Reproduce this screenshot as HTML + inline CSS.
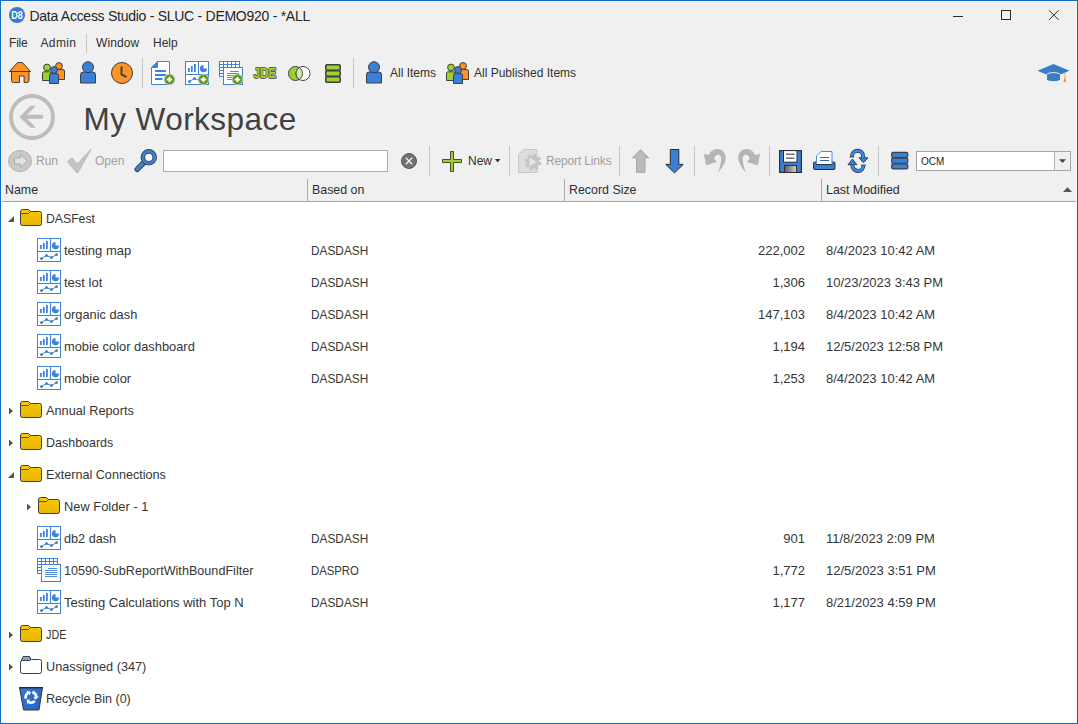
<!DOCTYPE html>
<html><head><meta charset="utf-8"><title>Data Access Studio</title>
<style>
*{box-sizing:border-box;margin:0;padding:0}
html,body{width:1078px;height:724px;overflow:hidden;background:#f0f0f0}
body{position:relative;font-family:"Liberation Sans",sans-serif;color:#1e1e1e}
.a{position:absolute;white-space:nowrap}
#frame{position:absolute;left:0;top:0;width:1078px;height:724px;border:1px solid #0c6dc9;box-shadow:inset 0 0 0 1px #fbf7f1;z-index:50;pointer-events:none}
.ui{font-size:12px;line-height:16px;color:#303030}
.dis{color:#a0a0a0}
.sep{position:absolute;width:1px;background:#c6c6c6}
#tree{position:absolute;left:1px;top:202px;width:1076px;height:521px;background:#fff}
.t{position:absolute;white-space:nowrap;font-size:13px;line-height:32px;height:32px;color:#363636;padding-top:1px}
.r{text-align:right}
.hdr{position:absolute;white-space:nowrap;top:181px;height:18px;line-height:18px;font-size:12.4px;color:#2e2e2e}
svg{position:absolute;overflow:visible}
</style></head><body>
<svg style="left:9px;top:7px" width="16" height="16" viewBox="0 0 16 16" ><circle cx="8" cy="8" r="8" fill="#3579d1"/><text x="8" y="11.6" font-family="Liberation Sans,sans-serif" font-size="10" font-weight="bold" fill="#fff" text-anchor="middle" textLength="11.6" lengthAdjust="spacingAndGlyphs">D8</text></svg>
<div class="a" id="title" style="left:29.5px;top:7px;font-size:14px;line-height:18px;color:#262626;letter-spacing:-0.27px">Data Access Studio - SLUC - DEMO920 - *ALL</div>
<svg style="left:953px;top:10px" width="106" height="11" viewBox="0 0 106 11" fill="none" stroke="#2b2b2b" stroke-width="1"><path d="M0 6.5H10"/><rect x="48.5" y="0.5" width="9" height="9"/><path d="M96 0.3l9.6 9.6M105.6 0.3l-9.6 9.6"/></svg>
<div class="a ui" style="left:9px;top:35px;letter-spacing:-0.2px">File</div>
<div class="a ui" style="left:40.5px;top:35px;letter-spacing:0.35px">Admin</div>
<div class="a ui" style="left:96px;top:35px;letter-spacing:0.1px">Window</div>
<div class="a ui" style="left:153px;top:35px;letter-spacing:0px">Help</div>
<div class="sep" style="left:86px;top:34px;height:19px"></div>
<svg style="left:9px;top:62px" width="22" height="22" viewBox="0 0 22 22" ><path d="M2.5 9.5V18.5a2 2 0 0 0 2 2H10.5V14h4.6V20.5H18a2 2 0 0 0 2-2V9.5Z" fill="#ff9326" stroke="#3f3f3f" stroke-width="1"/><path d="M8.5 0.6h5L21.6 9.5H0.4Z" fill="#ff9326" stroke="#3f3f3f" stroke-width="1" stroke-linejoin="round"/></svg>
<svg style="left:42px;top:62px" width="24" height="23" viewBox="0 0 24 23" ><path d="M0.5 18.5V11.3a1.5 1.5 0 0 1 1.5 -1.5H7.5a1.5 1.5 0 0 1 1.5 1.5V18.5Z" fill="#9bd230" stroke="#3f3f3f"/><circle cx="5" cy="5.5" r="3.4" fill="#9bd230" stroke="#3f3f3f"/><path d="M13.5 17.5V9.1a1.5 1.5 0 0 1 1.5 -1.5H21.0a1.5 1.5 0 0 1 1.5 1.5V17.5Z" fill="#ff9326" stroke="#3f3f3f"/><circle cx="17" cy="4" r="3.4" fill="#ff9326" stroke="#3f3f3f"/><path d="M7.5 21.5V13.2a1.5 1.5 0 0 1 1.5 -1.5H15.0a1.5 1.5 0 0 1 1.5 1.5V21.5Z" fill="#3a80d9" stroke="#3f3f3f"/><circle cx="12" cy="8" r="3.4" fill="#3a80d9" stroke="#3f3f3f"/></svg>
<svg style="left:80px;top:60px" width="16" height="24" viewBox="0 0 16 24" ><path d="M0.5 23V14.5a2.5 2.5 0 0 1 2.5 -2.5H13.0a2.5 2.5 0 0 1 2.5 2.5V23Z" fill="#3a80d9" stroke="#3f3f3f"/><circle cx="8" cy="7.2" r="5.5" fill="#3a80d9" stroke="#3f3f3f"/></svg>
<svg style="left:111px;top:62px" width="22" height="22" viewBox="0 0 22 22" ><circle cx="11" cy="11" r="10.5" fill="#ff9326" stroke="#3f3f3f"/><path d="M10.5 4.5V12.5L15.5 15" fill="none" stroke="#3f3f3f" stroke-width="2"/></svg>
<div class="sep" style="left:142px;top:58px;height:30px"></div>
<svg style="left:151px;top:61px" width="24" height="24" viewBox="0 0 24 24" ><path d="M6.5 0.5H18.5V23.5H0.5V6.5Z" fill="#fff" stroke="#3f82d8"/><path d="M0.5 6.5H6.5V0.5Z" fill="#3f82d8" stroke="#3f82d8"/><path d="M4 10H15M4 14H15M4 18H11.5" stroke="#3f82d8" stroke-width="2" fill="none"/><circle cx="18.5" cy="18.5" r="5.7" fill="#b1c98c"/><circle cx="18.5" cy="18.5" r="4.2" fill="#5c8c20" stroke="#4a7416" stroke-width="0.5"/><path d="M15.7 18.5H21.3M18.5 15.7V21.3" stroke="#fff" stroke-width="1.9" fill="none"/></svg>
<svg style="left:185px;top:61px" width="24" height="24" viewBox="0 0 24 24" ><rect x="0.5" y="0.5" width="23" height="23" fill="#fff" stroke="#3f82d8"/><path d="M0.5 13.5H23.5M13.5 0.5V13.5" stroke="#3f82d8" stroke-width="1" fill="none"/><path d="M3.8 11V7M6.8 11V5M9.9 11V3" stroke="#3f82d8" stroke-width="1.8" fill="none"/><path d="M18.5 7.6V4A3.6 3.6 0 1 0 22.1 7.6Z" fill="#3f82d8"/><path d="M4.5 20.5L9.5 17.5L14.5 19.5L19.5 16.5" stroke="#3f82d8" stroke-width="1" fill="none"/><circle cx="4.5" cy="20.5" r="1.5" fill="#3f82d8"/><circle cx="9.5" cy="17.5" r="1.5" fill="#3f82d8"/><circle cx="14.5" cy="19.5" r="1.5" fill="#3f82d8"/><circle cx="19.5" cy="16.5" r="1.5" fill="#3f82d8"/><circle cx="18.5" cy="18.5" r="5.7" fill="#b1c98c"/><circle cx="18.5" cy="18.5" r="4.2" fill="#5c8c20" stroke="#4a7416" stroke-width="0.5"/><path d="M15.7 18.5H21.3M18.5 15.7V21.3" stroke="#fff" stroke-width="1.9" fill="none"/></svg>
<svg style="left:219px;top:61px" width="24" height="24" viewBox="0 0 24 24" ><rect x="0.5" y="0.5" width="20" height="15" fill="#fff" stroke="#3f82d8"/><path d="M0.5 3.5H20.5M0.5 6.5H20.5M0.5 9.5H20.5M0.5 12.5H20.5M4.5 0.5V15.5M8.5 0.5V15.5M12.5 0.5V15.5M16.5 0.5V15.5" stroke="#3f82d8" fill="none"/><rect x="4.5" y="6.5" width="19" height="17" fill="#fff" stroke="#3f82d8"/><path d="M11 10.5H20M8 12.5H20M8 14.5H20M8 16.5H20M8 18.5H20" stroke="#3f82d8" stroke-width="0.9" fill="none"/><circle cx="18.5" cy="18.5" r="5.7" fill="#b1c98c"/><circle cx="18.5" cy="18.5" r="4.2" fill="#5c8c20" stroke="#4a7416" stroke-width="0.5"/><path d="M15.7 18.5H21.3M18.5 15.7V21.3" stroke="#fff" stroke-width="1.9" fill="none"/></svg>
<svg style="left:253px;top:67px" width="24" height="12" viewBox="0 0 24 12" ><text x="0.5" y="11" font-family="Liberation Sans,sans-serif" font-weight="bold" font-size="14" fill="#9bd230" stroke="#3f3f3f" stroke-width="1.5" paint-order="stroke" stroke-linejoin="round" textLength="23" lengthAdjust="spacingAndGlyphs">JDE</text></svg>
<svg style="left:288px;top:66px" width="23" height="15" viewBox="0 0 23 15" ><circle cx="7.5" cy="7.5" r="7" fill="#9bd230" stroke="#3f3f3f"/><circle cx="15" cy="7.5" r="7" fill="#fff" stroke="#3f3f3f"/><path d="M11.25 1.6A7 7 0 0 1 11.25 13.4A7 7 0 0 1 11.25 1.6Z" fill="#d4eaa6" stroke="#3f3f3f" stroke-width="1"/></svg>
<svg style="left:325px;top:64px" width="16" height="19" viewBox="0 0 16 19" ><rect x="0.75" y="0.75" width="14.5" height="5.5" rx="1.2" fill="#9bd230" stroke="#3f3f3f" stroke-width="1.5"/><rect x="0.75" y="6.75" width="14.5" height="5.5" rx="1.2" fill="#9bd230" stroke="#3f3f3f" stroke-width="1.5"/><rect x="0.75" y="12.75" width="14.5" height="5.5" rx="1.2" fill="#9bd230" stroke="#3f3f3f" stroke-width="1.5"/></svg>
<div class="sep" style="left:353px;top:58px;height:30px"></div>
<svg style="left:366px;top:60px" width="16" height="24" viewBox="0 0 16 24" ><path d="M0.5 23V14.5a2.5 2.5 0 0 1 2.5 -2.5H13.0a2.5 2.5 0 0 1 2.5 2.5V23Z" fill="#3a80d9" stroke="#3f3f3f"/><circle cx="8" cy="7.2" r="5.5" fill="#3a80d9" stroke="#3f3f3f"/></svg>
<div class="a ui" style="left:390px;top:65px">All Items</div>
<svg style="left:446px;top:62px" width="24" height="23" viewBox="0 0 24 23" ><path d="M0.5 18.5V11.3a1.5 1.5 0 0 1 1.5 -1.5H7.5a1.5 1.5 0 0 1 1.5 1.5V18.5Z" fill="#9bd230" stroke="#3f3f3f"/><circle cx="5" cy="5.5" r="3.4" fill="#9bd230" stroke="#3f3f3f"/><path d="M13.5 17.5V9.1a1.5 1.5 0 0 1 1.5 -1.5H21.0a1.5 1.5 0 0 1 1.5 1.5V17.5Z" fill="#ff9326" stroke="#3f3f3f"/><circle cx="17" cy="4" r="3.4" fill="#ff9326" stroke="#3f3f3f"/><path d="M7.5 21.5V13.2a1.5 1.5 0 0 1 1.5 -1.5H15.0a1.5 1.5 0 0 1 1.5 1.5V21.5Z" fill="#3a80d9" stroke="#3f3f3f"/><circle cx="12" cy="8" r="3.4" fill="#3a80d9" stroke="#3f3f3f"/></svg>
<div class="a ui" style="left:474px;top:65px">All Published Items</div>
<svg style="left:1038px;top:64px" width="31" height="18" viewBox="0 0 31 18" ><path d="M15.5 0L31.5 6.7L15.5 13.4L-0.5 6.7Z" fill="#3b7cc4"/><path d="M8.5 10.5V15.8C10.5 18.3 20.5 18.3 22.5 15.8V10.5C20.5 8 10.5 8 8.5 10.5Z" fill="#3b7cc4" stroke="#f0f0f0" stroke-width="1"/><path d="M26.6 9V13L25.5 18H28.2L27.4 13V9Z" fill="#f39a2b"/></svg>
<svg style="left:9px;top:94px" width="46" height="46" viewBox="0 0 46 46" ><circle cx="23" cy="23" r="21" fill="none" stroke="#bcbcbc" stroke-width="3.8"/><path d="M10.5 22.8L21.5 11.8H27L18 20.8H34V24.8H18L27 33.8H21.5Z" fill="#bcbcbc"/></svg>
<div class="a" id="h1" style="left:83.5px;top:101px;font-size:31.5px;line-height:36px;color:#414141;letter-spacing:0.45px">My Workspace</div>
<svg style="left:8px;top:150px" width="24" height="22" viewBox="0 0 24 22" ><ellipse cx="12" cy="11" rx="11.5" ry="10.6" fill="#c9c9c9" stroke="#b3b3b3"/><path d="M6.5 8H12.5V4.5L19.5 11L12.5 17.5V14H6.5Z" fill="#e2e2e2" stroke="#a8a8a8" stroke-linejoin="miter"/></svg>
<div class="a ui dis" style="left:36px;top:153px">Run</div>
<svg style="left:67px;top:149px" width="25" height="24" viewBox="0 0 25 24" ><path d="M0.5 12.5L5 8.8L10 15L24.3 0L11 23.5H9.5Z" fill="#c4c4c4" stroke="#b2b2b2" stroke-width="0.8" stroke-linejoin="round"/></svg>
<div class="a ui dis" style="left:95px;top:153px">Open</div>
<svg style="left:134px;top:149px" width="24" height="24" viewBox="0 0 24 24" ><path d="M10.5 13L3.2 20.3" stroke="#3f3f3f" stroke-width="5.4" stroke-linecap="round"/><path d="M10.5 13L3.2 20.3" stroke="#3a80d9" stroke-width="3.4" stroke-linecap="round"/><circle cx="14.8" cy="8.3" r="5.9" fill="#fff" stroke="#3f3f3f" stroke-width="4.6"/><circle cx="14.8" cy="8.3" r="5.9" fill="none" stroke="#3a80d9" stroke-width="2.9"/></svg>
<div class="a" style="left:163px;top:150px;width:225px;height:22px;background:#fff;border:1px solid #ababab"></div>
<svg style="left:401px;top:153px" width="16" height="16" viewBox="0 0 16 16" ><circle cx="8" cy="8" r="7.5" fill="#727272" stroke="#585858"/><path d="M4.8 4.8L11.2 11.2M11.2 4.8L4.8 11.2" stroke="#f4f4f4" stroke-width="1.25"/></svg>
<div class="sep" style="left:429px;top:146px;height:30px"></div>
<svg style="left:442px;top:151px" width="20" height="21" viewBox="0 0 20 21" ><path d="M8.5 0.5H11.5V8.5H19.5V11.5H11.5V20.5H8.5V11.5H0.5V8.5H8.5Z" fill="#9bd230" stroke="#4a4a3a" stroke-width="1"/></svg>
<div class="a ui" style="left:468px;top:153px">New</div>
<svg style="left:495px;top:159px" width="5.4" height="3.5" viewBox="0 0 5.4 3.5" ><path d="M0 0H5.4L2.7 3.5Z" fill="#333"/></svg>
<div class="sep" style="left:509px;top:146px;height:30px"></div>
<svg style="left:518px;top:149px" width="24" height="24" viewBox="0 0 24 24" ><path d="M5.5 0.5H19V23.5H0.5V5.5Z" fill="#dddddd" stroke="#c6c6c6"/><circle cx="15" cy="13" r="6.6" fill="none" stroke="#c4c4c4" stroke-width="3.6" stroke-dasharray="2.9 2.28"/><circle cx="15" cy="13" r="6.4" fill="#c4c4c4"/><path d="M11.5 8.5L18.8 13L11.5 17.5Z" fill="#e4e4e4"/></svg>
<div class="a ui dis" style="left:546px;top:153px;letter-spacing:-0.15px">Report Links</div>
<div class="sep" style="left:619px;top:146px;height:30px"></div>
<svg style="left:632px;top:149px" width="18" height="24" viewBox="0 0 18 24" ><path d="M8.7 0.6L16.9 8.8H13V23.4H4.5V8.8H0.5Z" fill="#bababa" stroke="#a8a8a8" stroke-linejoin="round"/></svg>
<svg style="left:665px;top:149px" width="19" height="24" viewBox="0 0 19 24" ><g transform="translate(0.3,0)"><path d="M9.2 23.9L17.9 15.4H13.5V0.5H5V15.4H0.5Z" fill="#3a80d9" stroke="#2e2e2e" stroke-linejoin="miter"/></g></svg>
<div class="sep" style="left:694px;top:146px;height:30px"></div>
<svg style="left:703px;top:148px" width="24" height="25" viewBox="0 0 24 25" ><path d="M0.9 6L3 17.2L14 14L11 10.6C12 7.5 14.5 6 16.5 7C19 8.5 19 13 15 24.7C20 19 23 13 22.7 9C22.3 4 18.5 1 14.4 1C10.5 1 7.5 3.5 5.7 7Z" fill="#b5b5b5"/></svg>
<svg style="left:737px;top:148px" width="24" height="25" viewBox="0 0 24 25" ><g transform="translate(23.9,0) scale(-1,1)"><path d="M0.9 6L3 17.2L14 14L11 10.6C12 7.5 14.5 6 16.5 7C19 8.5 19 13 15 24.7C20 19 23 13 22.7 9C22.3 4 18.5 1 14.4 1C10.5 1 7.5 3.5 5.7 7Z" fill="#b5b5b5"/></g></svg>
<div class="sep" style="left:769px;top:146px;height:30px"></div>
<svg style="left:779px;top:150px" width="23" height="23" viewBox="0 0 23 23" ><rect x="0.6" y="0.6" width="21.8" height="21.8" fill="#3a80d9" stroke="#2e2e2e" stroke-width="1.2"/><rect x="4.5" y="0.6" width="13.5" height="11.6" fill="#fff" stroke="#2e2e2e" stroke-width="1"/><path d="M7 4.2H15.5M7 8.2H15.5" stroke="#6e6e6e" stroke-width="1.6"/><defs><linearGradient id="sv779" x1="0" y1="0" x2="1" y2="0"><stop offset="0" stop-color="#5e5e5e"/><stop offset="1" stop-color="#d0d0d0"/></linearGradient></defs><rect x="5.5" y="15.5" width="12" height="7" fill="url(#sv779)" stroke="#2e2e2e" stroke-width="1"/></svg>
<svg style="left:813px;top:151px" width="23" height="19" viewBox="0 0 23 19" ><path d="M0.6 12.5a1.5 1.5 0 0 1 1.5-1.5H20.4a1.5 1.5 0 0 1 1.5 1.5V17a1.5 1.5 0 0 1-1.5 1.5H2.1a1.5 1.5 0 0 1-1.5-1.5Z" fill="#3a80d9" stroke="#2e2e2e" stroke-width="1.1"/><path d="M8 0.5H19V13.5H3.5V5Z" fill="#fff" stroke="#4d8be0" stroke-width="1"/><path d="M2.6 13.6H19.9" stroke="#2e2e2e" stroke-width="1"/><path d="M7 6.5H16M7 9.5H16" stroke="#2f62c0" stroke-width="1"/></svg>
<svg style="left:848px;top:148px" width="20" height="26" viewBox="0 0 20 26" ><g transform="translate(0,0.5)"><g fill="none" stroke="#2a3240" stroke-width="4"><path d="M3.9 8.2V7.9A5.7 5.7 0 0 1 15.3 7.9V9.5"/><path d="M4.4 16V16.9A5.5 5.5 0 0 0 15.4 16.9V16.8"/></g><path d="M11 9.3H19.9L15.5 14.3Z" fill="#3a80d9" stroke="#2a3240" stroke-width="0.9" stroke-linejoin="round"/><path d="M0 16.2H8.9L4.4 10.5Z" fill="#3a80d9" stroke="#2a3240" stroke-width="0.9" stroke-linejoin="round"/><g fill="none" stroke="#3a86ea" stroke-width="2.6"><path d="M3.9 8.2V7.9A5.7 5.7 0 0 1 15.3 7.9V9.5"/><path d="M4.4 16V16.9A5.5 5.5 0 0 0 15.4 16.9V16.8"/></g><path d="M1.6 8.6H6.2M13.1 16.5H17.7" stroke="#2a3240" stroke-width="0.8"/></g></svg>
<div class="sep" style="left:878px;top:146px;height:30px"></div>
<svg style="left:891px;top:151px" width="18" height="20" viewBox="0 0 18 20" ><g transform="translate(0,0.7)"><rect x="0.75" y="0.75" width="16.0" height="5.1" rx="1.2" fill="#3a80d9" stroke="#3f3f3f" stroke-width="1.2"/><rect x="0.75" y="6.45" width="16.0" height="5.1" rx="1.2" fill="#3a80d9" stroke="#3f3f3f" stroke-width="1.2"/><rect x="0.75" y="12.15" width="16.0" height="5.1" rx="1.2" fill="#3a80d9" stroke="#3f3f3f" stroke-width="1.2"/></g></svg>
<div class="a" style="left:916px;top:151px;width:155px;height:20px;background:#fff;border:1px solid #a6a6a6;font-size:10px;line-height:19px;padding-left:4px;color:#222">OCM</div>
<div class="a" style="left:1054px;top:152px;width:16px;height:18px;background:#f0f0f0;border-left:1px solid #b4b4b4"></div>
<svg style="left:1059px;top:159px" width="7" height="4" viewBox="0 0 7 4" ><g transform="translate(0,0.3)"><path d="M0 0H7L3.5 3.6Z" fill="#444"/></g></svg>
<div class="hdr" style="left:5px">Name</div>
<div class="hdr" style="left:312px">Based on</div>
<div class="hdr" style="left:569px">Record Size</div>
<div class="hdr" style="left:826px">Last Modified</div>
<div class="sep" style="left:307px;top:179px;height:22px;background:#aaaaaa"></div>
<div class="sep" style="left:564px;top:179px;height:22px;background:#aaaaaa"></div>
<div class="sep" style="left:821px;top:179px;height:22px;background:#aaaaaa"></div>
<svg style="left:1063px;top:187px" width="9" height="6" viewBox="0 0 9 6" ><g transform="translate(0,0.3)"><path d="M4.5 0L9 4.8H0Z" fill="#555"/></g></svg>
<div class="a" style="left:1px;top:201px;width:1076px;height:1px;background:#a6a6a6"></div>
<div id="tree"></div>
<svg style="left:20px;top:209px" width="22" height="17" viewBox="0 0 22 17" ><defs><linearGradient id="fg20_209" x1="0" y1="0" x2="0" y2="1"><stop offset="0" stop-color="#f8c90a"/><stop offset="1" stop-color="#e8b600"/></linearGradient></defs><path d="M2.5 0.5H8.5L10.5 2.5H19.5A2 2 0 0 1 21.5 4.5V14.5A2 2 0 0 1 19.5 16.5H2.5A2 2 0 0 1 0.5 14.5V3Q0.5 0.5 2.5 0.5Z" fill="url(#fg20_209)" stroke="#3f3f3f" stroke-linejoin="round"/><path d="M0.8 4.6H8.4L10.4 2.7" fill="none" stroke="#5a4a14" stroke-width="1"/></svg>
<svg style="left:8px;top:216px" width="6" height="6" viewBox="0 0 6 6" ><path d="M6 0V6H0Z" fill="#555"/></svg>
<div class="t" style="left:46px;top:202px;transform:scaleX(0.94);transform-origin:0 50%">DASFest</div>
<svg style="left:37px;top:238px" width="24" height="24" viewBox="0 0 24 24" ><rect x="0.5" y="0.5" width="23" height="23" fill="#fff" stroke="#3f82d8"/><path d="M0.5 13.5H23.5M13.5 0.5V13.5" stroke="#3f82d8" stroke-width="1" fill="none"/><path d="M3.8 11V7M6.8 11V5M9.9 11V3" stroke="#3f82d8" stroke-width="1.8" fill="none"/><path d="M18.5 7.6V4A3.6 3.6 0 1 0 22.1 7.6Z" fill="#3f82d8"/><path d="M4.5 20.5L9.5 17.5L14.5 19.5L19.5 16.5" stroke="#3f82d8" stroke-width="1" fill="none"/><circle cx="4.5" cy="20.5" r="1.5" fill="#3f82d8"/><circle cx="9.5" cy="17.5" r="1.5" fill="#3f82d8"/><circle cx="14.5" cy="19.5" r="1.5" fill="#3f82d8"/><circle cx="19.5" cy="16.5" r="1.5" fill="#3f82d8"/></svg>
<div class="t" style="left:64px;top:234px">testing map</div>
<div class="t" style="left:310.6px;top:234px;transform:scaleX(0.911);transform-origin:0 50%">DASDASH</div><div class="t r" style="left:705px;width:100px;top:234px">222,002</div><div class="t" style="left:826px;top:234px">8/4/2023 10:42 AM</div>
<svg style="left:37px;top:270px" width="24" height="24" viewBox="0 0 24 24" ><rect x="0.5" y="0.5" width="23" height="23" fill="#fff" stroke="#3f82d8"/><path d="M0.5 13.5H23.5M13.5 0.5V13.5" stroke="#3f82d8" stroke-width="1" fill="none"/><path d="M3.8 11V7M6.8 11V5M9.9 11V3" stroke="#3f82d8" stroke-width="1.8" fill="none"/><path d="M18.5 7.6V4A3.6 3.6 0 1 0 22.1 7.6Z" fill="#3f82d8"/><path d="M4.5 20.5L9.5 17.5L14.5 19.5L19.5 16.5" stroke="#3f82d8" stroke-width="1" fill="none"/><circle cx="4.5" cy="20.5" r="1.5" fill="#3f82d8"/><circle cx="9.5" cy="17.5" r="1.5" fill="#3f82d8"/><circle cx="14.5" cy="19.5" r="1.5" fill="#3f82d8"/><circle cx="19.5" cy="16.5" r="1.5" fill="#3f82d8"/></svg>
<div class="t" style="left:64px;top:266px">test lot</div>
<div class="t" style="left:310.6px;top:266px;transform:scaleX(0.911);transform-origin:0 50%">DASDASH</div><div class="t r" style="left:705px;width:100px;top:266px">1,306</div><div class="t" style="left:826px;top:266px">10/23/2023 3:43 PM</div>
<svg style="left:37px;top:302px" width="24" height="24" viewBox="0 0 24 24" ><rect x="0.5" y="0.5" width="23" height="23" fill="#fff" stroke="#3f82d8"/><path d="M0.5 13.5H23.5M13.5 0.5V13.5" stroke="#3f82d8" stroke-width="1" fill="none"/><path d="M3.8 11V7M6.8 11V5M9.9 11V3" stroke="#3f82d8" stroke-width="1.8" fill="none"/><path d="M18.5 7.6V4A3.6 3.6 0 1 0 22.1 7.6Z" fill="#3f82d8"/><path d="M4.5 20.5L9.5 17.5L14.5 19.5L19.5 16.5" stroke="#3f82d8" stroke-width="1" fill="none"/><circle cx="4.5" cy="20.5" r="1.5" fill="#3f82d8"/><circle cx="9.5" cy="17.5" r="1.5" fill="#3f82d8"/><circle cx="14.5" cy="19.5" r="1.5" fill="#3f82d8"/><circle cx="19.5" cy="16.5" r="1.5" fill="#3f82d8"/></svg>
<div class="t" style="left:64px;top:298px;transform:scaleX(0.984);transform-origin:0 50%">organic dash</div>
<div class="t" style="left:310.6px;top:298px;transform:scaleX(0.911);transform-origin:0 50%">DASDASH</div><div class="t r" style="left:705px;width:100px;top:298px">147,103</div><div class="t" style="left:826px;top:298px">8/4/2023 10:42 AM</div>
<svg style="left:37px;top:334px" width="24" height="24" viewBox="0 0 24 24" ><rect x="0.5" y="0.5" width="23" height="23" fill="#fff" stroke="#3f82d8"/><path d="M0.5 13.5H23.5M13.5 0.5V13.5" stroke="#3f82d8" stroke-width="1" fill="none"/><path d="M3.8 11V7M6.8 11V5M9.9 11V3" stroke="#3f82d8" stroke-width="1.8" fill="none"/><path d="M18.5 7.6V4A3.6 3.6 0 1 0 22.1 7.6Z" fill="#3f82d8"/><path d="M4.5 20.5L9.5 17.5L14.5 19.5L19.5 16.5" stroke="#3f82d8" stroke-width="1" fill="none"/><circle cx="4.5" cy="20.5" r="1.5" fill="#3f82d8"/><circle cx="9.5" cy="17.5" r="1.5" fill="#3f82d8"/><circle cx="14.5" cy="19.5" r="1.5" fill="#3f82d8"/><circle cx="19.5" cy="16.5" r="1.5" fill="#3f82d8"/></svg>
<div class="t" style="left:64px;top:330px;transform:scaleX(0.989);transform-origin:0 50%">mobie color dashboard</div>
<div class="t" style="left:310.6px;top:330px;transform:scaleX(0.911);transform-origin:0 50%">DASDASH</div><div class="t r" style="left:705px;width:100px;top:330px">1,194</div><div class="t" style="left:826px;top:330px">12/5/2023 12:58 PM</div>
<svg style="left:37px;top:366px" width="24" height="24" viewBox="0 0 24 24" ><rect x="0.5" y="0.5" width="23" height="23" fill="#fff" stroke="#3f82d8"/><path d="M0.5 13.5H23.5M13.5 0.5V13.5" stroke="#3f82d8" stroke-width="1" fill="none"/><path d="M3.8 11V7M6.8 11V5M9.9 11V3" stroke="#3f82d8" stroke-width="1.8" fill="none"/><path d="M18.5 7.6V4A3.6 3.6 0 1 0 22.1 7.6Z" fill="#3f82d8"/><path d="M4.5 20.5L9.5 17.5L14.5 19.5L19.5 16.5" stroke="#3f82d8" stroke-width="1" fill="none"/><circle cx="4.5" cy="20.5" r="1.5" fill="#3f82d8"/><circle cx="9.5" cy="17.5" r="1.5" fill="#3f82d8"/><circle cx="14.5" cy="19.5" r="1.5" fill="#3f82d8"/><circle cx="19.5" cy="16.5" r="1.5" fill="#3f82d8"/></svg>
<div class="t" style="left:64px;top:362px">mobie color</div>
<div class="t" style="left:310.6px;top:362px;transform:scaleX(0.911);transform-origin:0 50%">DASDASH</div><div class="t r" style="left:705px;width:100px;top:362px">1,253</div><div class="t" style="left:826px;top:362px">8/4/2023 10:42 AM</div>
<svg style="left:20px;top:401px" width="22" height="17" viewBox="0 0 22 17" ><defs><linearGradient id="fg20_401" x1="0" y1="0" x2="0" y2="1"><stop offset="0" stop-color="#f8c90a"/><stop offset="1" stop-color="#e8b600"/></linearGradient></defs><path d="M2.5 0.5H8.5L10.5 2.5H19.5A2 2 0 0 1 21.5 4.5V14.5A2 2 0 0 1 19.5 16.5H2.5A2 2 0 0 1 0.5 14.5V3Q0.5 0.5 2.5 0.5Z" fill="url(#fg20_401)" stroke="#3f3f3f" stroke-linejoin="round"/><path d="M0.8 4.6H8.4L10.4 2.7" fill="none" stroke="#5a4a14" stroke-width="1"/></svg>
<svg style="left:9px;top:407px" width="5" height="8" viewBox="0 0 5 8" ><path d="M0 0.5L4 4L0 7.5Z" fill="#555"/></svg>
<div class="t" style="left:46px;top:394px;transform:scaleX(0.98);transform-origin:0 50%">Annual Reports</div>
<svg style="left:20px;top:433px" width="22" height="17" viewBox="0 0 22 17" ><defs><linearGradient id="fg20_433" x1="0" y1="0" x2="0" y2="1"><stop offset="0" stop-color="#f8c90a"/><stop offset="1" stop-color="#e8b600"/></linearGradient></defs><path d="M2.5 0.5H8.5L10.5 2.5H19.5A2 2 0 0 1 21.5 4.5V14.5A2 2 0 0 1 19.5 16.5H2.5A2 2 0 0 1 0.5 14.5V3Q0.5 0.5 2.5 0.5Z" fill="url(#fg20_433)" stroke="#3f3f3f" stroke-linejoin="round"/><path d="M0.8 4.6H8.4L10.4 2.7" fill="none" stroke="#5a4a14" stroke-width="1"/></svg>
<svg style="left:9px;top:439px" width="5" height="8" viewBox="0 0 5 8" ><path d="M0 0.5L4 4L0 7.5Z" fill="#555"/></svg>
<div class="t" style="left:46px;top:426px;transform:scaleX(0.96);transform-origin:0 50%">Dashboards</div>
<svg style="left:20px;top:465px" width="22" height="17" viewBox="0 0 22 17" ><defs><linearGradient id="fg20_465" x1="0" y1="0" x2="0" y2="1"><stop offset="0" stop-color="#f8c90a"/><stop offset="1" stop-color="#e8b600"/></linearGradient></defs><path d="M2.5 0.5H8.5L10.5 2.5H19.5A2 2 0 0 1 21.5 4.5V14.5A2 2 0 0 1 19.5 16.5H2.5A2 2 0 0 1 0.5 14.5V3Q0.5 0.5 2.5 0.5Z" fill="url(#fg20_465)" stroke="#3f3f3f" stroke-linejoin="round"/><path d="M0.8 4.6H8.4L10.4 2.7" fill="none" stroke="#5a4a14" stroke-width="1"/></svg>
<svg style="left:8px;top:472px" width="6" height="6" viewBox="0 0 6 6" ><path d="M6 0V6H0Z" fill="#555"/></svg>
<div class="t" style="left:46px;top:458px;transform:scaleX(0.97);transform-origin:0 50%">External Connections</div>
<svg style="left:38px;top:497px" width="22" height="17" viewBox="0 0 22 17" ><defs><linearGradient id="fg38_497" x1="0" y1="0" x2="0" y2="1"><stop offset="0" stop-color="#f8c90a"/><stop offset="1" stop-color="#e8b600"/></linearGradient></defs><path d="M2.5 0.5H8.5L10.5 2.5H19.5A2 2 0 0 1 21.5 4.5V14.5A2 2 0 0 1 19.5 16.5H2.5A2 2 0 0 1 0.5 14.5V3Q0.5 0.5 2.5 0.5Z" fill="url(#fg38_497)" stroke="#3f3f3f" stroke-linejoin="round"/><path d="M0.8 4.6H8.4L10.4 2.7" fill="none" stroke="#5a4a14" stroke-width="1"/></svg>
<svg style="left:27px;top:503px" width="5" height="8" viewBox="0 0 5 8" ><path d="M0 0.5L4 4L0 7.5Z" fill="#555"/></svg>
<div class="t" style="left:64px;top:490px;transform:scaleX(0.99);transform-origin:0 50%">New Folder - 1</div>
<svg style="left:37px;top:526px" width="24" height="24" viewBox="0 0 24 24" ><rect x="0.5" y="0.5" width="23" height="23" fill="#fff" stroke="#3f82d8"/><path d="M0.5 13.5H23.5M13.5 0.5V13.5" stroke="#3f82d8" stroke-width="1" fill="none"/><path d="M3.8 11V7M6.8 11V5M9.9 11V3" stroke="#3f82d8" stroke-width="1.8" fill="none"/><path d="M18.5 7.6V4A3.6 3.6 0 1 0 22.1 7.6Z" fill="#3f82d8"/><path d="M4.5 20.5L9.5 17.5L14.5 19.5L19.5 16.5" stroke="#3f82d8" stroke-width="1" fill="none"/><circle cx="4.5" cy="20.5" r="1.5" fill="#3f82d8"/><circle cx="9.5" cy="17.5" r="1.5" fill="#3f82d8"/><circle cx="14.5" cy="19.5" r="1.5" fill="#3f82d8"/><circle cx="19.5" cy="16.5" r="1.5" fill="#3f82d8"/></svg>
<div class="t" style="left:64px;top:522px;transform:scaleX(0.975);transform-origin:0 50%">db2 dash</div>
<div class="t" style="left:310.6px;top:522px;transform:scaleX(0.911);transform-origin:0 50%">DASDASH</div><div class="t r" style="left:705px;width:100px;top:522px">901</div><div class="t" style="left:826px;top:522px">11/8/2023 2:09 PM</div>
<svg style="left:37px;top:558px" width="24" height="24" viewBox="0 0 24 24" ><rect x="0.5" y="0.5" width="20" height="15" fill="#fff" stroke="#3f82d8"/><path d="M0.5 3.5H20.5M0.5 6.5H20.5M0.5 9.5H20.5M0.5 12.5H20.5M4.5 0.5V15.5M8.5 0.5V15.5M12.5 0.5V15.5M16.5 0.5V15.5" stroke="#3f82d8" fill="none"/><rect x="4.5" y="6.5" width="19" height="17" fill="#fff" stroke="#3f82d8"/><path d="M11 10.5H20M8 12.5H20M8 14.5H20M8 16.5H20M8 18.5H20" stroke="#3f82d8" stroke-width="0.9" fill="none"/></svg>
<div class="t" style="left:64px;top:554px;transform:scaleX(0.971);transform-origin:0 50%">10590-SubReportWithBoundFilter</div>
<div class="t" style="left:310.6px;top:554px;transform:scaleX(0.872);transform-origin:0 50%">DASPRO</div><div class="t r" style="left:705px;width:100px;top:554px">1,772</div><div class="t" style="left:826px;top:554px">12/5/2023 3:51 PM</div>
<svg style="left:37px;top:590px" width="24" height="24" viewBox="0 0 24 24" ><rect x="0.5" y="0.5" width="23" height="23" fill="#fff" stroke="#3f82d8"/><path d="M0.5 13.5H23.5M13.5 0.5V13.5" stroke="#3f82d8" stroke-width="1" fill="none"/><path d="M3.8 11V7M6.8 11V5M9.9 11V3" stroke="#3f82d8" stroke-width="1.8" fill="none"/><path d="M18.5 7.6V4A3.6 3.6 0 1 0 22.1 7.6Z" fill="#3f82d8"/><path d="M4.5 20.5L9.5 17.5L14.5 19.5L19.5 16.5" stroke="#3f82d8" stroke-width="1" fill="none"/><circle cx="4.5" cy="20.5" r="1.5" fill="#3f82d8"/><circle cx="9.5" cy="17.5" r="1.5" fill="#3f82d8"/><circle cx="14.5" cy="19.5" r="1.5" fill="#3f82d8"/><circle cx="19.5" cy="16.5" r="1.5" fill="#3f82d8"/></svg>
<div class="t" style="left:64px;top:586px">Testing Calculations with Top N</div>
<div class="t" style="left:310.6px;top:586px;transform:scaleX(0.911);transform-origin:0 50%">DASDASH</div><div class="t r" style="left:705px;width:100px;top:586px">1,177</div><div class="t" style="left:826px;top:586px">8/21/2023 4:59 PM</div>
<svg style="left:20px;top:625px" width="22" height="17" viewBox="0 0 22 17" ><defs><linearGradient id="fg20_625" x1="0" y1="0" x2="0" y2="1"><stop offset="0" stop-color="#f8c90a"/><stop offset="1" stop-color="#e8b600"/></linearGradient></defs><path d="M2.5 0.5H8.5L10.5 2.5H19.5A2 2 0 0 1 21.5 4.5V14.5A2 2 0 0 1 19.5 16.5H2.5A2 2 0 0 1 0.5 14.5V3Q0.5 0.5 2.5 0.5Z" fill="url(#fg20_625)" stroke="#3f3f3f" stroke-linejoin="round"/><path d="M0.8 4.6H8.4L10.4 2.7" fill="none" stroke="#5a4a14" stroke-width="1"/></svg>
<svg style="left:9px;top:631px" width="5" height="8" viewBox="0 0 5 8" ><path d="M0 0.5L4 4L0 7.5Z" fill="#555"/></svg>
<div class="t" style="left:46px;top:618px;transform:scaleX(0.83);transform-origin:0 50%">JDE</div>
<svg style="left:20px;top:656px" width="22" height="18" viewBox="0 0 22 18" ><path d="M1.2 5L3 0.5H9.5L11.5 4.5" fill="#7aa7e2" stroke="#3f3f3f" stroke-linejoin="round"/><path d="M2.5 4.5H9.5L11.3 3.5H19.5A2 2 0 0 1 21.5 5.5V15.5A2 2 0 0 1 19.5 17.5H2.5A2 2 0 0 1 0.5 15.5V6.5A2 2 0 0 1 2.5 4.5Z" fill="#fff" stroke="#3f3f3f" stroke-linejoin="round"/></svg>
<svg style="left:9px;top:663px" width="5" height="8" viewBox="0 0 5 8" ><path d="M0 0.5L4 4L0 7.5Z" fill="#555"/></svg>
<div class="t" style="left:46px;top:650px;transform:scaleX(0.978);transform-origin:0 50%">Unassigned (347)</div>
<svg style="left:19px;top:687px" width="24" height="24" viewBox="0 0 24 24" ><defs><linearGradient id="rb" x1="0" y1="0" x2="1" y2="1"><stop offset="0" stop-color="#2f76de"/><stop offset="1" stop-color="#2a63bf"/></linearGradient></defs><path d="M0.5 0.5H23.5L20 23H4.5Z" fill="url(#rb)" stroke="#33363f" stroke-width="1" stroke-linejoin="round"/><path d="M0.3 0.7H23.7" stroke="#2b2b2b" stroke-width="1.5"/><g fill="none" stroke="#fff" stroke-width="2.7"><path d="M6.88 11.57A5.3 5.3 0 0 1 9.11 5.76"/><path d="M13.37 5.08A5.3 5.3 0 0 1 17.29 9.92"/><path d="M15.75 13.95A5.3 5.3 0 0 1 9.59 14.92"/></g><path d="M10.62 8.23L7.3 3.48L12.0 5.1ZM14.39 9.99L20.17 9.49L16.42 12.75ZM10.99 12.38L8.53 17.63L7.58 12.75Z" fill="#fff"/></svg>
<div class="t" style="left:46px;top:682px;transform:scaleX(0.962);transform-origin:0 50%">Recycle Bin (0)</div>
<div id="frame"></div>
</body></html>
